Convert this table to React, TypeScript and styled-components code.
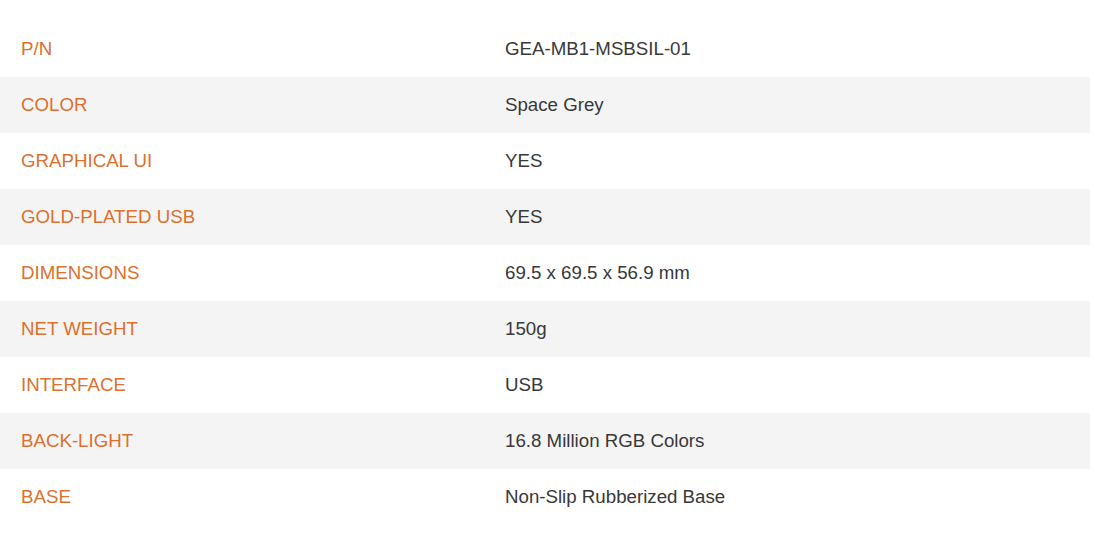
import styled, { createGlobalStyle } from "styled-components"

const specs: [string, string][] = [
  ["P/N", "GEA-MB1-MSBSIL-01"],
  ["COLOR", "Space Grey"],
  ["GRAPHICAL UI", "YES"],
  ["GOLD-PLATED USB", "YES"],
  ["DIMENSIONS", "69.5 x 69.5 x 56.9 mm"],
  ["NET WEIGHT", "150g"],
  ["INTERFACE", "USB"],
  ["BACK-LIGHT", "16.8 Million RGB Colors"],
  ["BASE", "Non-Slip Rubberized Base"],
]

export default function App() {
  return (
    <>
      <GlobalStyle />
      <Page>
        <Table>
          {specs.map(([label, value], i) => (
            <Row key={label} $striped={i % 2 === 1}>
              <Label>{label}</Label>
              <Value>{value}</Value>
            </Row>
          ))}
        </Table>
      </Page>
    </>
  )
}

const GlobalStyle = createGlobalStyle`
  body {
    margin: 0;
    background: #fff;
    font-family: "Liberation Sans", Arial, sans-serif;
  }
`
const Page = styled.div`
  padding: 21px 0 14px 0;
`
const Table = styled.div`
  width: 1090px;
  display: flex;
  flex-direction: column;
`
const Row = styled.div<{ $striped: boolean }>`
  height: 56px;
  display: grid;
  grid-template-columns: 505px 1fr;
  align-items: center;
  background-color: ${({ $striped }) => ($striped ? "#f4f4f4" : "#fff")};
  font-size: 18.7px;
`
const Label = styled.div`
  padding-left: 21px;
  color: #dc702e;
`
const Value = styled.div`
  color: #383838;
`
